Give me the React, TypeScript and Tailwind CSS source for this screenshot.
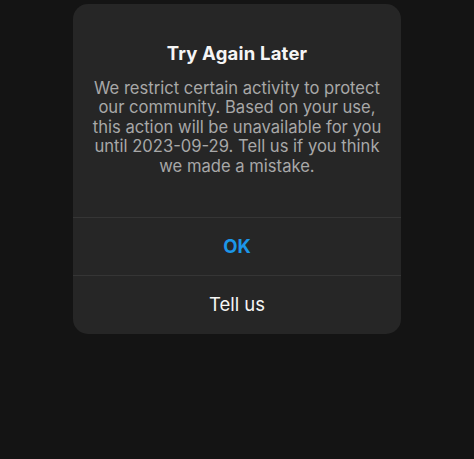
export default function App() {
  return (
    <div
      className="flex min-h-screen justify-center bg-[#141414] pt-[4px]"
      style={{ fontFamily: 'Inter, "Noto Sans", sans-serif' }}
    >
      <div className="flex h-[330px] w-[328px] flex-col overflow-hidden rounded-[15px] bg-[#262626]">
        <div className="px-4 pb-[41px] pt-[37px] text-center">
          <h2 className="text-[18.5px] font-bold leading-[24px] tracking-[0.2px] text-[#f5f5f5]">
            Try Again Later
          </h2>
          <p className="mt-[14px] text-[16.6px] leading-[19.4px] text-[#a8a8a8]">
            We restrict certain activity to protect our community. Based on your use, this action will be unavailable for you until 2023-09-29. Tell us if you think we made a mistake.
          </p>
        </div>
        <button className="flex h-[58px] items-center justify-center border-t border-[#353535] text-[18.5px] font-bold text-[#1c96e8]">
          OK
        </button>
        <button className="flex h-[58px] items-center justify-center border-t border-[#353535] text-[18.5px] text-[#f5f5f5]">
          Tell us
        </button>
      </div>
    </div>
  );
}
